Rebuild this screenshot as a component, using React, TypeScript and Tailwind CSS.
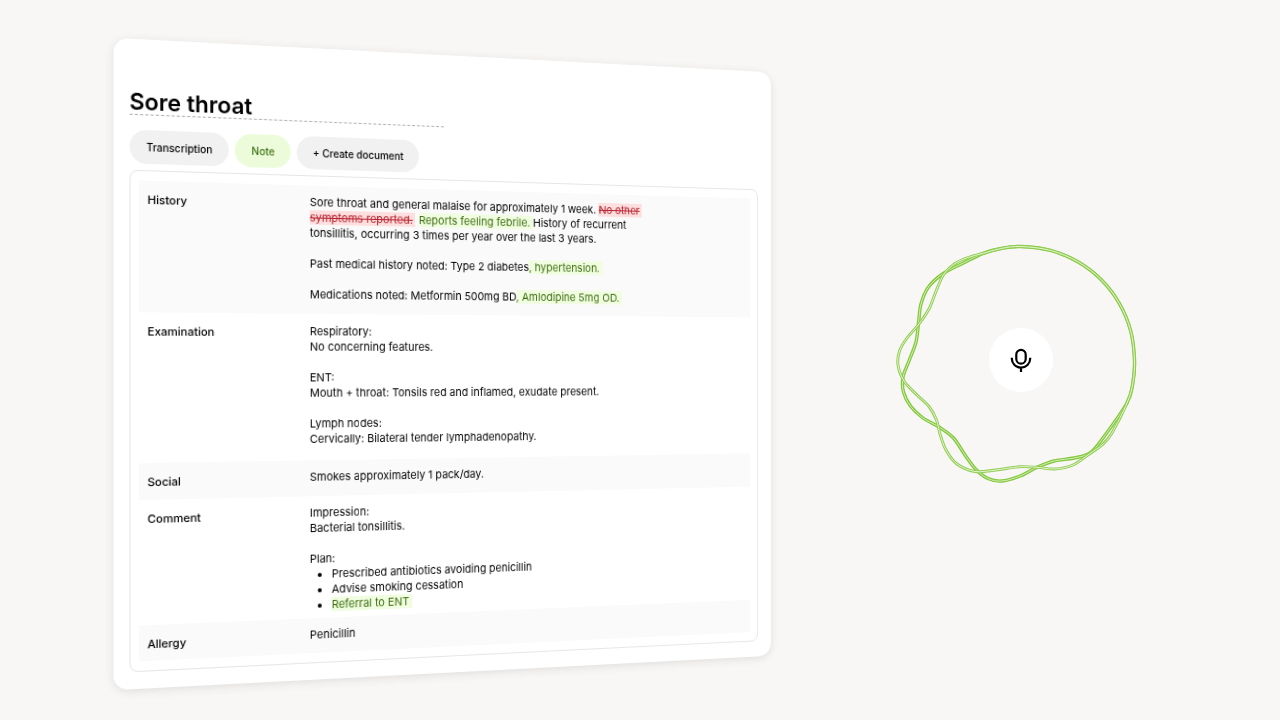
import type { ReactNode } from 'react';
import clsx from 'clsx';

type Point = [number, number];

// The calm half of the ring, shared by every strand
const ARC: Point[] = [
  [231, 168], [236.7, 149], [238.5, 125], [234.6, 95.6], [223.3, 68.3],
  [205.3, 44.7], [181.8, 26.7], [154.4, 15.4], [125, 11.5], [105, 13.5], [87.3, 18.3],
];

const BACK_STRAND: Point[] = [
  ...ARC,
  [72, 22.5], [59, 28.5], [48, 39], [40.5, 55], [33.5, 73], [23, 89], [11, 103],
  [3.5, 116], [2, 130], [8, 146], [20.5, 159.5], [33, 171.5], [40.5, 185], [44, 199],
  [50, 215], [61, 229], [79, 236.5], [100, 235], [123, 231.8], [141, 232.3],
  [159, 234], [177, 230], [194, 218.5], [206, 210], [216, 198],
];

const FRONT_STRAND: Point[] = [
  ...ARC,
  [67.3, 28], [47.3, 38.5], [32.5, 52], [25, 69], [22.5, 88], [20, 107], [13, 126],
  [7, 142], [7.5, 157], [14.5, 171], [27, 183], [43, 192], [57.5, 203], [69, 220],
  [80, 234.5], [92, 243.5], [106, 246], [124, 241], [140.7, 232.5], [158, 226],
  [178, 223], [194, 218], [207, 203],
];

// Closed Catmull-Rom spline through the points
function toPath(points: Point[]) {
  const n = points.length;
  let d = `M${points[0][0]} ${points[0][1]}`;
  for (let i = 0; i < n; i++) {
    const [a, b, c, e] = [points[(i + n - 1) % n], points[i], points[(i + 1) % n], points[(i + 2) % n]];
    d += `C${b[0] + (c[0] - a[0]) / 6} ${b[1] + (c[1] - a[1]) / 6} ${c[0] - (e[0] - b[0]) / 6} ${c[1] - (e[1] - b[1]) / 6} ${c[0]} ${c[1]}`;
  }
  return d + 'Z';
}

function VoiceRing() {
  const back = toPath(BACK_STRAND);
  const front = toPath(FRONT_STRAND);

  return (
    <svg viewBox="0 0 250 250" className="col-start-1 row-start-1 w-full overflow-visible" fill="none" aria-hidden="true">
      <path d={front} stroke="#84c83e" strokeWidth="3.4" />
      <path d={front} stroke="#d3eeb4" strokeWidth="1" />
      <path d={back} stroke="#93cd55" strokeWidth="2.9" />
      <path d={back} stroke="#e2f4ce" strokeWidth="1" />
    </svg>
  );
}

function MicIcon() {
  return (
    <svg viewBox="0 0 24 24" className="size-6" fill="none" stroke="#000" strokeWidth="2.2" aria-hidden="true">
      <rect x="7.3" y="1.8" width="9.4" height="13.8" rx="4.7" />
      <path d="M2.8 9.8v.6a9.2 9.2 0 0 0 18.4 0v-.6M12 19.4V24" />
    </svg>
  );
}

function Added({ children }: { children: ReactNode }) {
  return <ins className="-mr-[3px] bg-[#f0fde0] pr-[3px] text-[#3f6f12] no-underline">{children}</ins>;
}

function Removed({ children }: { children: ReactNode }) {
  return <del className="-mr-[2px] bg-[#fddfdf] box-decoration-clone pr-[2px] text-[#b8202c] line-through">{children}</del>;
}

const TABS = [
  { label: 'Transcription', active: false },
  { label: 'Note', active: true },
  { label: '+ Create document', active: false },
];

const SECTIONS: { title: string; spacing: string; body: ReactNode }[] = [
  {
    title: 'History',
    spacing: 'pt-[9px] pb-[11px]',
    body: (
      <>
        <p>
          Sore throat and general malaise for approximately 1 week.{' '}
          <Removed>No other symptoms reported.</Removed>&nbsp;{' '}
          <Added>Reports feeling febrile.</Added> History of recurrent tonsillitis, occurring 3
          times per year over the last 3 years.
        </p>
        <p className="mt-[15px]">
          Past medical history noted: Type 2 diabetes<Added>, hypertension.</Added>
        </p>
        <p className="mt-[15px]">
          Medications noted: Metformin 500mg BD<Added>, Amlodipine 5mg OD.</Added>
        </p>
      </>
    ),
  },
  {
    title: 'Examination',
    spacing: 'pt-[10px] pb-[13px]',
    body: (
      <>
        <p>Respiratory:</p>
        <p>No concerning features.</p>
        <p className="mt-[15px]">ENT:</p>
        <p>Mouth + throat: Tonsils red and inflamed, exudate present.</p>
        <p className="mt-[15px]">Lymph nodes:</p>
        <p>Cervically: Bilateral tender lymphadenopathy.</p>
      </>
    ),
  },
  { title: 'Social', spacing: 'pt-[9px] pb-[11px]', body: <p>Smokes approximately 1 pack/day.</p> },
  {
    title: 'Comment',
    spacing: 'pt-[9px] pb-[5px]',
    body: (
      <>
        <p>Impression:</p>
        <p>Bacterial tonsillitis.</p>
        <p className="mt-[15px]">Plan:</p>
        <ul className="list-disc pl-[22px]">
          <li>Prescribed antibiotics avoiding penicillin</li>
          <li>Advise smoking cessation</li>
          <li>
            <Added>Referral to ENT</Added>
          </li>
        </ul>
      </>
    ),
  },
  { title: 'Allergy', spacing: 'pt-[9px] pb-[10px]', body: <p>Penicillin</p> },
];

export default function App() {
  return (
    <main className="flex min-h-screen items-center gap-[91px] bg-[#f8f7f5] pr-[134px] pl-[116px] font-[Inter,sans-serif] text-black">
      <div className="mt-2 min-w-0 flex-1 perspective-[1911px]">
        <article className="rotate-y-[18deg] rounded-[14px] bg-white px-[15px] pt-[38px] pb-4 shadow-[0_2px_10px_rgba(0,0,0,0.1)]">
          <input
            aria-label="Note title"
            defaultValue="Sore throat"
            className="block h-[34px] w-[312px] border-b border-dashed border-[#b0b0b0] pt-2 text-[22px] leading-6 font-semibold outline-none"
          />

          <div className="mt-[14px] flex gap-[6px]">
            {TABS.map((tab) => (
              <button
                key={tab.label}
                type="button"
                className={clsx(
                  'h-8 rounded-full px-4 text-[10px] font-medium',
                  tab.active ? 'bg-[#ecfcdb] text-[#3f6f12]' : 'bg-[#f1f1f1]',
                )}
              >
                {tab.label}
              </button>
            ))}
          </div>

          <div className="mt-[6px] rounded-lg border border-[#e6e6e6] px-2 py-[9px]">
            <table className="w-full text-left">
              <tbody>
                {SECTIONS.map((section) => (
                  <tr key={section.title} className="align-top odd:bg-[#fafafa]">
                    <th scope="row" className="w-[166px] pt-[10px] pl-2 text-[11px] leading-4 font-medium">
                      {section.title}
                    </th>
                    <td className={clsx('text-[11px] leading-[15px]', section.spacing)}>
                      <div className="max-w-[350px]">{section.body}</div>
                    </td>
                  </tr>
                ))}
              </tbody>
            </table>
          </div>
        </article>
      </div>

      <div className="grid w-[250px] shrink-0 place-items-center">
        <VoiceRing />
        <button
          type="button"
          aria-label="Record"
          className="col-start-1 row-start-1 grid size-16 place-items-center rounded-full bg-white"
        >
          <MicIcon />
        </button>
      </div>
    </main>
  );
}
